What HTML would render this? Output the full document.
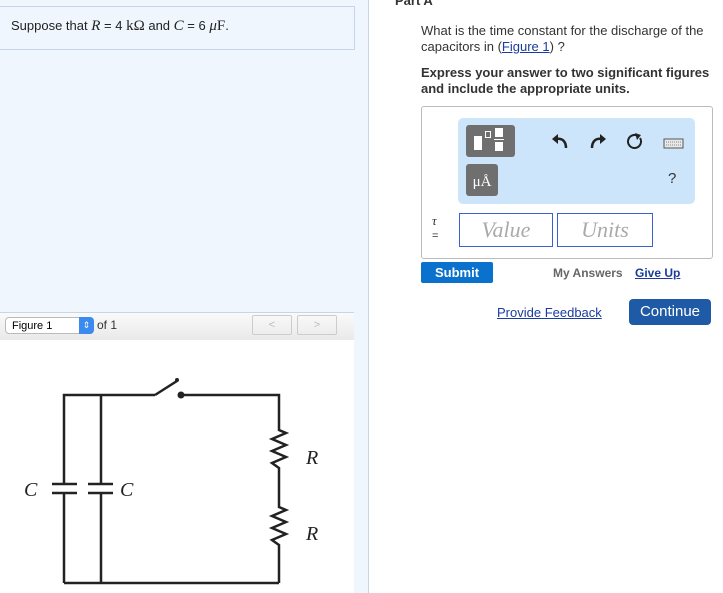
<!DOCTYPE html>
<html><head><style>
body{margin:0;width:723px;height:593px;overflow:hidden;font-family:"Liberation Sans",Arial,sans-serif;background:#fff;position:relative}
.abs{position:absolute}
a{color:#1a3c9e;text-decoration:underline}
</style></head><body>
<div class="abs" style="left:0;top:0;width:368px;height:593px;background:#f0f6fd;border-right:1px solid #c5d6e8"></div>
<div class="abs" style="left:-1px;top:6px;width:354px;height:42px;border:1px solid #c5d6e8;background:#f0f6fd"></div>
<div class="abs" style="left:11px;top:18px;font-size:13px;color:#222">Suppose that <i style="font-family:'Liberation Serif',serif;font-size:15px">R</i> = 4 <span style="font-family:'Liberation Serif',serif;font-size:15px">kΩ</span> and <i style="font-family:'Liberation Serif',serif;font-size:15px">C</i> = 6 <span style="font-family:'Liberation Serif',serif;font-size:15px"><i>μ</i>F</span>.</div>
<div class="abs" style="left:0;top:312px;width:354px;height:27px;background:linear-gradient(#fafafa,#e9e9e9);border-top:1px solid #c5d6e8;border-bottom:1px solid #c5d6e8"></div>
<div class="abs" style="left:0;top:340px;width:354px;height:253px;background:#fff"></div>
<div class="abs" style="left:5px;top:317px;width:88px;height:17px;border:1px solid #bbb;border-radius:4px;background:#fff;font-size:11px;line-height:16px;padding-left:6px;box-sizing:border-box">Figure 1</div>
<div class="abs" style="left:79px;top:317px;width:15px;height:17px;background:#3a8af0;border-radius:0 4px 4px 0;color:#fff;font-size:9px;text-align:center;line-height:17px">⇕</div>
<div class="abs" style="left:97px;top:318px;font-size:12px;color:#333">of 1</div>
<div class="abs" style="left:252px;top:315px;width:38px;height:18px;border:1px solid #ccc;border-radius:2px;color:#bbb;font-size:11px;text-align:center;line-height:18px">&lt;</div>
<div class="abs" style="left:297px;top:315px;width:38px;height:18px;border:1px solid #ccc;border-radius:2px;color:#bbb;font-size:11px;text-align:center;line-height:18px">&gt;</div>
<svg class="abs" style="left:0;top:340px" width="354" height="253" viewBox="0 340 354 253">
<g fill="none" stroke="#222" stroke-width="2.5">
<polyline points="155,395 64,395 64,484"/><line x1="64" y1="493" x2="64" y2="583"/>
<line x1="101" y1="395" x2="101" y2="484"/><line x1="101" y1="493" x2="101" y2="583"/>
<line x1="64" y1="583" x2="279" y2="583"/>
<line x1="155" y1="395" x2="177" y2="381"/>
<polyline points="181,395 279,395 279,430 286,433 272,439 286,445 272,451 286,457 272,463 279,468 279,507 286,510 272,516 286,522 272,528 286,534 272,540 279,545 279,583"/>
<line x1="52" y1="484" x2="77" y2="484"/><line x1="52" y1="493" x2="77" y2="493"/>
<line x1="88" y1="484" x2="113" y2="484"/><line x1="88" y1="493" x2="113" y2="493"/>
</g>
<circle cx="177" cy="380" r="2" fill="#222"/><circle cx="181" cy="395" r="3.5" fill="#222"/>
<g font-family="Liberation Serif,serif" font-style="italic" font-size="20" fill="#222">
<text x="24" y="496">C</text><text x="120" y="496">C</text><text x="306" y="464">R</text><text x="306" y="540">R</text></g>
</svg>
<div class="abs" style="left:395px;top:-7px;font-size:13px;font-weight:bold;color:#333">Part A</div>
<div class="abs" style="left:421px;top:23px;width:295px;font-size:13px;line-height:16px;color:#333">What is the time constant for the discharge of the capacitors in (<a>Figure 1</a>) ?</div>
<div class="abs" style="left:421px;top:65px;width:300px;font-size:13px;line-height:16px;font-weight:bold;color:#333">Express your answer to two significant figures and include the appropriate units.</div>
<div class="abs" style="left:421px;top:106px;width:290px;height:151px;border:1px solid #bbb;border-radius:3px"></div>
<div class="abs" style="left:458px;top:118px;width:237px;height:86px;background:#cde5fb;border-radius:5px"></div>
<div class="abs" style="left:466px;top:125px;width:49px;height:32px;background:#6f6f6f;border-radius:3px"></div>
<div class="abs" style="left:474px;top:136px;width:8px;height:14px;background:#fff"></div>
<div class="abs" style="left:485px;top:131px;width:4px;height:5px;border:1px solid #fff"></div>
<div class="abs" style="left:495px;top:128px;width:8px;height:9px;background:#fff"></div>
<div class="abs" style="left:494px;top:139px;width:10px;height:1px;background:#fff"></div>
<div class="abs" style="left:495px;top:142px;width:8px;height:9px;background:#fff"></div>
<div class="abs" style="left:466px;top:164px;width:32px;height:32px;background:#6f6f6f;border-radius:3px;color:#fff;font-family:'Liberation Serif',serif;font-size:15px;text-align:center;line-height:36px">μÅ</div>
<svg class="abs" style="left:550px;top:132px" width="140" height="20">
<path d="M16 16 C16 9 12 6 6 7" fill="none" stroke="#222" stroke-width="2.5"/><path d="M2 7 L8 2 L8 12Z" fill="#222"/>
<path d="M42 16 C42 9 46 6 52 7" fill="none" stroke="#222" stroke-width="2.5"/><path d="M56 7 L50 2 L50 12Z" fill="#222"/>
<path d="M88 4 A6.5 6.5 0 1 0 90 6" fill="none" stroke="#222" stroke-width="2"/><path d="M85 1 L91 3 L87 8Z" fill="#222"/>
<rect x="114" y="7" width="19" height="9" fill="#e8e8e8" stroke="#555"/>
<path d="M116 10h15M116 13h15" stroke="#888" stroke-dasharray="1 1"/>
</svg>
<div class="abs" style="left:668px;top:170px;font-size:15px;color:#333">?</div>
<div class="abs" style="left:432px;top:213px;font-size:13px;font-style:italic;font-family:'Liberation Serif',serif;color:#333">τ</div>
<div class="abs" style="left:432px;top:230px;font-size:11px;color:#333">=</div>
<div class="abs" style="left:459px;top:213px;width:94px;height:34px;border:1px solid #3a5fd0;box-sizing:border-box;font-family:'Liberation Serif',serif;font-style:italic;font-size:22px;color:#aaa;text-align:center;line-height:32px">Value</div>
<div class="abs" style="left:557px;top:213px;width:96px;height:34px;border:1px solid #3a5fd0;box-sizing:border-box;font-family:'Liberation Serif',serif;font-style:italic;font-size:22px;color:#aaa;text-align:center;line-height:32px">Units</div>
<div class="abs" style="left:421px;top:262px;width:72px;height:21px;background:#0a72cc;border-radius:2px;color:#fff;font-size:13px;font-weight:bold;text-align:center;line-height:21px">Submit</div>
<div class="abs" style="left:553px;top:266px;font-size:12px;font-weight:bold;color:#666">My Answers</div>
<div class="abs" style="left:635px;top:266px;font-size:12px;font-weight:bold"><a>Give Up</a></div>
<div class="abs" style="left:497px;top:305px;font-size:13px"><a>Provide Feedback</a></div>
<div class="abs" style="left:629px;top:299px;width:82px;height:26px;background:#1f5aa6;border-radius:4px;color:#fff;font-size:15px;text-align:center;line-height:26px">Continue</div>
</body></html>
